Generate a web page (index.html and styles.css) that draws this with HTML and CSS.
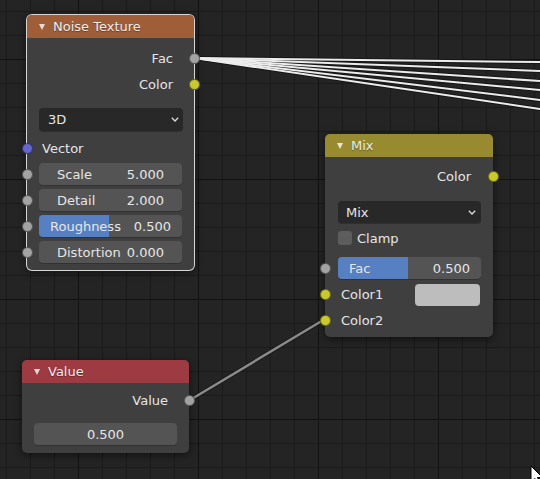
FILE: index.html
```html
<!DOCTYPE html>
<html>
<head>
<meta charset="utf-8">
<title>Node Editor</title>
<link rel="stylesheet" href="styles.css">
</head>
<body>
<div class="editor">
  <svg class="links" width="540" height="479" viewBox="0 0 540 479">
    <g class="link-outline">
      <line x1="194" y1="58" x2="540" y2="62"/>
      <line x1="194" y1="58" x2="540" y2="71"/>
      <line x1="194" y1="58" x2="540" y2="81"/>
      <line x1="194" y1="58" x2="540" y2="90"/>
      <line x1="194" y1="58" x2="540" y2="100"/>
      <line x1="194" y1="58" x2="540" y2="109"/>
      <line x1="190" y1="400" x2="325" y2="319"/>
    </g>
    <g class="link-white">
      <line x1="194" y1="58" x2="540" y2="62"/>
      <line x1="194" y1="58" x2="540" y2="71"/>
      <line x1="194" y1="58" x2="540" y2="81"/>
      <line x1="194" y1="58" x2="540" y2="90"/>
      <line x1="194" y1="58" x2="540" y2="100"/>
      <line x1="194" y1="58" x2="540" y2="109"/>
    </g>
    <line class="link-grey" x1="190" y1="400" x2="325" y2="319"/>
  </svg>

  <div class="node node-noise">
    <div class="header header-texture"><span class="tri"></span>Noise Texture</div>
    <div class="body body-noise">
      <div class="row out"><span>Fac</span><i class="sock sock-r grey"></i></div>
      <div class="row out"><span>Color</span><i class="sock sock-r yellow"></i></div>
      <div class="dropdown dd-noise"><span>3D</span><svg class="chev" width="8" height="5" viewBox="0 0 8 5"><polyline points="0.8,0.8 4,4 7.2,0.8"/></svg></div>
      <div class="row in"><i class="sock sock-l blue"></i><span>Vector</span></div>
      <div class="row field"><i class="sock sock-l grey"></i><div class="fld num"><span>Scale</span><span>5.000</span></div></div>
      <div class="row field"><i class="sock sock-l grey"></i><div class="fld num"><span>Detail</span><span>2.000</span></div></div>
      <div class="row field"><i class="sock sock-l grey"></i><div class="fld slider" style="--v:49%"><span>Roughness</span><span>0.500</span></div></div>
      <div class="row field"><i class="sock sock-l grey"></i><div class="fld num"><span>Distortion</span><span>0.000</span></div></div>
    </div>
  </div>

  <div class="node node-mix">
    <div class="header header-color"><span class="tri"></span>Mix</div>
    <div class="body body-mix">
      <div class="row out"><span>Color</span><i class="sock sock-r yellow"></i></div>
      <div class="dropdown dd-mix"><span>Mix</span><svg class="chev" width="8" height="5" viewBox="0 0 8 5"><polyline points="0.8,0.8 4,4 7.2,0.8"/></svg></div>
      <div class="row check-row"><span class="checkbox"></span><span>Clamp</span></div>
      <div class="row field"><i class="sock sock-l grey"></i><div class="fld slider" style="--v:49%"><span>Fac</span><span>0.500</span></div></div>
      <div class="row in color-row"><i class="sock sock-l yellow"></i><span>Color1</span><span class="swatch"></span></div>
      <div class="row in"><i class="sock sock-l yellow"></i><span>Color2</span></div>
    </div>
  </div>

  <div class="node node-value">
    <div class="header header-input"><span class="tri"></span>Value</div>
    <div class="body body-value">
      <div class="row out"><span>Value</span><i class="sock sock-r grey"></i></div>
      <div class="row field value-field"><div class="fld center"><span>0.500</span></div></div>
    </div>
  </div>

  <svg class="cursor" width="14" height="22" viewBox="0 0 14 22">
    <path d="M1 1 L1 17 L5 13.5 L8 20.5 L10.5 19.5 L7.5 12.5 L12.5 12.5 Z"/>
  </svg>
</div>
</body>
</html>
```

FILE: styles.css
```css
html, body {
  margin: 0;
  padding: 0;
  background: #232323;
}

.editor {
  position: relative;
  width: 540px;
  height: 479px;
  overflow: hidden;
  background-color: #242424;
  background-image:
    linear-gradient(to right, #121212 1px, transparent 1px),
    linear-gradient(to bottom, #121212 1px, transparent 1px),
    linear-gradient(to right, #1a1a1a 1px, transparent 1px),
    linear-gradient(to bottom, #1a1a1a 1px, transparent 1px);
  background-size: 120px 120px, 120px 120px, 24px 24px, 24px 24px;
  background-position: 78px 0, 0 59px, 6px 0, 0 11px;
  font-family: "DejaVu Sans", "Liberation Sans", sans-serif;
  font-size: 13px;
  color: #e6e6e6;
}

.links {
  position: absolute;
  left: 0;
  top: 0;
}
.link-outline line {
  stroke: #161616;
  stroke-width: 4;
  stroke-linecap: round;
}
.link-white line {
  stroke: #ececec;
  stroke-width: 2;
  stroke-linecap: round;
}
.link-grey {
  stroke: #8a8a8a;
  stroke-width: 2.6;
  stroke-linecap: round;
}

.node {
  position: absolute;
  background: #3f3f3f;
  border-radius: 5px;
  box-shadow: 0 2px 8px rgba(0, 0, 0, 0.55);
}
.node-noise {
  left: 27px;
  top: 15px;
  width: 167px;
  box-shadow: 0 0 0 1px #d6d6d6, 0 2px 8px rgba(0, 0, 0, 0.55);
}
.node-mix {
  left: 325px;
  top: 134px;
  width: 168px;
}
.node-value {
  left: 22px;
  top: 360px;
  width: 167px;
}

.header {
  height: 23px;
  display: flex;
  align-items: center;
  padding-left: 12px;
  border-radius: 5px 5px 0 0;
  color: #ececec;
  text-shadow: 0 1px 1px rgba(0, 0, 0, 0.35);
}
.header-texture { background: #a05e38; }
.header-color { background: #978a2f; }
.header-input { background: #9e3a41; }

.tri {
  width: 0;
  height: 0;
  border-left: 3.5px solid transparent;
  border-right: 3.5px solid transparent;
  border-top: 6px solid rgba(255, 255, 255, 0.78);
  margin-right: 8px;
  margin-top: 1px;
}

.body {
  display: flex;
  flex-direction: column;
}
.body-noise { padding: 7px 0 5px; }
.body-mix { padding: 6px 0 4px; }
.body-value { padding: 4px 0 6px; }

.row {
  position: relative;
  height: 26px;
  display: flex;
  align-items: center;
  white-space: nowrap;
}
.row.out {
  justify-content: flex-end;
  padding-right: 21px;
}
.node-mix .row.out { padding-right: 22px; }
.row.in { padding-left: 15px; }
.node-mix .row.in { padding-left: 16px; }
.row.field { padding: 0 12px; }
.node-mix .row.field { padding: 0 12px 0 13px; }
.value-field { margin-top: 8px; padding: 0 11px 0 13px; }

.sock {
  position: absolute;
  top: 50%;
  width: 11px;
  height: 11px;
  margin-top: -5.5px;
  border-radius: 50%;
  box-sizing: border-box;
  border: 1px solid rgba(0, 0, 0, 0.45);
}
.sock-l { left: -5.5px; }
.sock-r { right: -5.5px; }
.grey { background: #a3a3a3; }
.yellow { background: #c9c92a; }
.blue { background: #6565cc; }

.dropdown {
  height: 23px;
  background: #282828;
  border-radius: 4px;
  display: flex;
  align-items: center;
  justify-content: space-between;
  box-shadow: 0 1px 0 rgba(0, 0, 0, 0.25);
}
.dd-noise {
  margin: 11px 11px 4px 12px;
  padding: 0 4px 0 9px;
}
.dd-mix {
  height: 22px;
  margin: 12px 12px 3px 13px;
  padding: 0 5px 0 8px;
}
.chev polyline {
  fill: none;
  stroke: #dcdcdc;
  stroke-width: 1.3;
}

.fld {
  flex: 1;
  height: 22px;
  border-radius: 4px;
  background: #545454;
  display: flex;
  align-items: center;
  justify-content: space-between;
  box-shadow: 0 1px 0 rgba(0, 0, 0, 0.2);
}
.fld.num { padding: 0 18px; }
.fld.slider {
  padding: 0 11px;
  background: linear-gradient(to right, #5680c2 var(--v), #545454 var(--v));
}
.fld.center { justify-content: center; }

.check-row {
  height: 24px;
  padding-left: 13px;
  margin-bottom: 5px;
}
.checkbox {
  width: 14px;
  height: 14px;
  border-radius: 3px;
  background: #5d5d5d;
  margin-right: 5px;
}

.color-row { justify-content: flex-start; }
.swatch {
  margin-left: auto;
  margin-right: 13px;
  width: 65px;
  height: 22px;
  border-radius: 4px;
  background: #bdbdbd;
  margin-top: 1px;
}

.cursor {
  position: absolute;
  left: 530px;
  top: 465px;
}
.cursor path {
  fill: #ffffff;
  stroke: #000000;
  stroke-width: 1;
}
```
